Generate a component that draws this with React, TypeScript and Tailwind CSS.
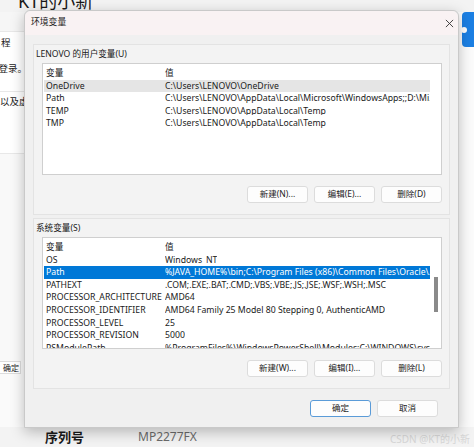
import React from 'react';

const userVars: [string, string][] = [
  ['OneDrive', 'C:\\Users\\LENOVO\\OneDrive'],
  ['Path', 'C:\\Users\\LENOVO\\AppData\\Local\\Microsoft\\WindowsApps;;D:\\Mi...'],
  ['TEMP', 'C:\\Users\\LENOVO\\AppData\\Local\\Temp'],
  ['TMP', 'C:\\Users\\LENOVO\\AppData\\Local\\Temp'],
];

const sysVars: [string, string][] = [
  ['OS', 'Windows_NT'],
  ['Path', '%JAVA_HOME%\\bin;C:\\Program Files (x86)\\Common Files\\Oracle\\...'],
  ['PATHEXT', '.COM;.EXE;.BAT;.CMD;.VBS;.VBE;.JS;.JSE;.WSF;.WSH;.MSC'],
  ['PROCESSOR_ARCHITECTURE', 'AMD64'],
  ['PROCESSOR_IDENTIFIER', 'AMD64 Family 25 Model 80 Stepping 0, AuthenticAMD'],
  ['PROCESSOR_LEVEL', '25'],
  ['PROCESSOR_REVISION', '5000'],
  ['PSModulePath', '%ProgramFiles%\\WindowsPowerShell\\Modules;C:\\WINDOWS\\syst'],
];

const font = { fontFamily: '"Noto Sans", "Noto Sans CJK SC", sans-serif' };

const Btn: React.FC<{ label: string; primary?: boolean }> = ({ label, primary }) => (
  <div
    className={`w-[61px] h-[17px] flex items-center justify-center rounded-[3px] bg-[#fdfdfd] text-[8.5px] text-[#1b1b1b] border ${
      primary ? 'border-[#5a9bd8]' : 'border-[#dcdcdc]'
    }`}
  >
    {label}
  </div>
);

const Row: React.FC<{ name: string; value: string; sel?: 'gray' | 'blue' }> = ({ name, value, sel }) => (
  <div
    className={`flex h-[12.6px] items-center whitespace-nowrap ${
      sel === 'blue' ? 'bg-[#0078d7] text-white' : sel === 'gray' ? 'bg-[#e5e5e5]' : ''
    }`}
  >
    <div className="w-[121px] pl-[2px] shrink-0">{name}</div>
    <div className="overflow-hidden">{value}</div>
  </div>
);

const VarList: React.FC<{ rows: [string, string][]; scroll?: boolean; selected: number; tone: 'gray' | 'blue' }> = ({
  rows,
  scroll,
  selected,
  tone,
}) => (
  <div className="ml-[8px] mr-[7px] h-[112px] border border-[#cfcfcf] bg-white flex overflow-hidden text-[8.7px] text-[#1a1a1a] leading-none">
    <div className="flex-1 pt-[3px] pl-[1px] overflow-hidden">
      <div className="flex h-[12.6px] items-center">
        <div className="w-[121px] pl-[2px]">变量</div>
        <div>值</div>
      </div>
      {rows.map((r, i) => (
        <Row key={r[0]} name={r[0]} value={r[1]} sel={i === selected ? tone : undefined} />
      ))}
    </div>
    {scroll ? (
      <div className="w-[11px] flex justify-center pt-[39px]">
        <div className="w-[4px] h-[35px] bg-[#8a8a8a]" />
      </div>
    ) : (
      <div className="w-[11px]" />
    )}
  </div>
);

const Group: React.FC<{ title: string; children: React.ReactNode; buttons: string[] }> = ({ title, children, buttons }) => (
  <div className="mx-[8px] border border-[#e3e3e3] bg-[#f3f3f3]">
    <div className="h-[16px] pl-[2px] pt-[2px] text-[8.6px] text-[#1a1a1a] leading-[14px]">{title}</div>
    <div className="h-[2px]" />
    {children}
    <div className="flex justify-end gap-[6px] pr-[7px] pt-[11px] pb-[11px]">
      {buttons.map((b) => (
        <Btn key={b} label={b} />
      ))}
    </div>
  </div>
);

export default function App() {
  return (
    <div className="relative w-[474px] h-[447px] overflow-hidden bg-[#f3f3f3]" style={font}>
      {/* background settings window */}
      <div className="flex flex-col h-full">
        <div className="h-[12px] bg-[#f3f3f3] pl-[18px] relative overflow-hidden">
          <div className="-mt-[8px] text-[18px] leading-[18px] text-[#1a1a1a]">KT的小新</div>
        </div>
        <div className="flex flex-1">
          <div className="w-[30px] flex flex-col text-[9.5px] leading-[13px] text-[#1a1a1a] bg-[#fafafa]">
            <div className="h-[20px] bg-[#f6f6f6] border-b border-[#e8e8e8]" />
            <div className="h-[60px] bg-white border-b border-[#e8e8e8] flex flex-col pt-[4px]">
              <div className="pl-[1px]">程</div>
              <div className="mt-[13px] whitespace-nowrap -ml-[9px]">…登录。</div>
            </div>
            <div className="h-[62px] bg-white border-b border-[#e8e8e8] pt-[3px] whitespace-nowrap">以及虚</div>
            <div className="h-[207px] bg-[#f9f9f9]" />
            <div className="flex items-center">
              <div className="w-[23px] h-[13px] bg-white border border-[#dcdcdc] text-[8px] flex items-center justify-center pl-[3px] -ml-[2px] whitespace-nowrap">确定</div>
            </div>
          </div>
          <div className="flex-1" />
          <div className="w-[16px] bg-[#fbfbfb]">
            <div className="ml-[4px] w-[14px] h-[35px] rounded-l-[4px] bg-[#1b7fe3] flex items-center">
              <div className="w-[6px] h-[6px] rounded-full bg-white -ml-[1px]" />
            </div>
          </div>
        </div>
        <div className="h-[20px] flex items-center leading-none bg-[#f3f3f3]">
          <div className="pl-[45px] w-[138px] text-[13px] font-bold text-[#1a1a1a]">序列号</div>
          <div className="text-[12px] text-[#6b6b6b]">MP2277FX</div>
          <div className="ml-auto mr-[4px] text-[10px] text-[#d8d8d8] self-end mb-[3px]">CSDN @KT的小新</div>
        </div>
      </div>

      {/* environment variables dialog */}
      <div className="absolute left-[24px] top-[10px] w-[435px] h-[418px] flex flex-col bg-[#f0f0f0] border border-[#c9c9c9] rounded-t-[6px] shadow-[0_4px_14px_rgba(0,0,0,0.25)]">
        <div className="h-[24px] flex items-center justify-between bg-[#f9f2f3] rounded-t-[6px] pl-[6px] pr-[4px] text-[8.8px] text-[#1a1a1a]">
          <span>环境变量</span>
          <svg width="9" height="9" viewBox="0 0 10 10">
            <path d="M1 1 L9 9 M9 1 L1 9" stroke="#333" strokeWidth="1" />
          </svg>
        </div>
        <div className="h-[9px]" />
        <Group title="LENOVO 的用户变量(U)" buttons={['新建(N)...', '编辑(E)...', '删除(D)']}>
          <VarList rows={userVars} selected={0} tone="gray" />
        </Group>
        <div className="h-[3px]" />
        <Group title="系统变量(S)" buttons={['新建(W)...', '编辑(I)...', '删除(L)']}>
          <VarList rows={sysVars} selected={1} tone="blue" scroll />
        </Group>
        <div className="flex justify-end gap-[6px] pr-[20px] pt-[11px]">
          <Btn label="确定" primary />
          <Btn label="取消" />
        </div>
      </div>
    </div>
  );
}
